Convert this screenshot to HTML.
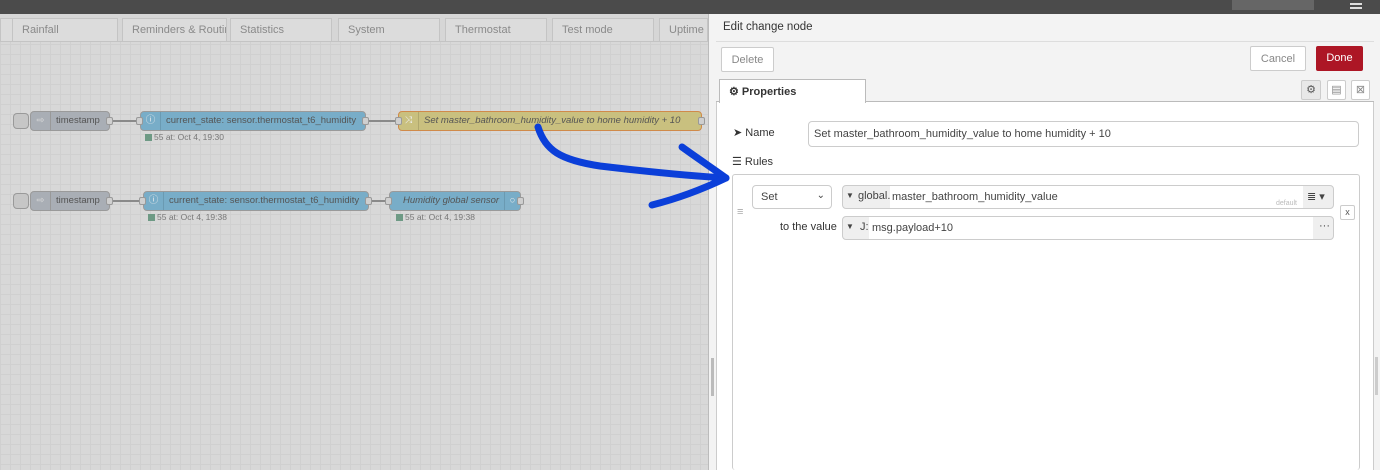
<!DOCTYPE html><html><head><style>
*{box-sizing:border-box;margin:0;padding:0}
body{width:1380px;height:470px;overflow:hidden;position:relative;font-family:"Liberation Sans",sans-serif;font-size:11px;color:#555;background:#d6d6d6}
.a{position:absolute}
#canvas{left:0;top:14px;width:708px;height:456px;background-color:#d8d8d8;background-image:linear-gradient(#d0d0d0 1px,transparent 1px),linear-gradient(90deg,#d0d0d0 1px,transparent 1px);background-size:10px 10px}
.tab{top:18px;height:23px;background:#dcdcdc;border:1px solid #c4c4c4;border-bottom:none;color:#8a8a8a;font-size:11px;padding:5px 9px;white-space:nowrap;overflow:hidden}
.node{height:20px;border:1px solid #9a9a9a;border-radius:4px;font-size:9.5px;line-height:18px;white-space:nowrap;color:#555;overflow:hidden}
.port{width:7px;height:8px;background:#cfcfcf;border:1px solid #999;border-radius:2px}
.wire{height:2px;background:#8a8a8a}
.st{font-size:8.5px;color:#777}
.st i{display:inline-block;width:7px;height:7px;background:#6e9a85;margin-right:2px;vertical-align:-1px}
.btn{border:1px solid #ccc;background:#fff;border-radius:2px;color:#888;font-size:11px;text-align:center}
.inp{border:1px solid #ccc;border-radius:4px;background:#fff;font-size:11px;color:#444}
</style></head><body>
<div class="a" style="left:0;top:0;width:1380px;height:14px;background:#4b4b4b"></div>
<div class="a" style="left:1232px;top:0;width:82px;height:10px;background:#666"></div>
<div class="a" style="left:1350px;top:3px;width:12px;height:2px;background:#ddd"></div>
<div class="a" style="left:1350px;top:7px;width:12px;height:2px;background:#ddd"></div>
<div id="canvas" class="a"></div>
<div class="a" style="left:0;top:14px;width:708px;height:28px;background:#d6d6d6;border-bottom:1px solid #c4c4c4"></div>
<div class="a tab" style="left:0;width:8px"></div>
<div class="a tab" style="left:12px;width:106px">Rainfall</div>
<div class="a tab" style="left:122px;width:105px">Reminders &amp; Routin</div>
<div class="a tab" style="left:230px;width:102px">Statistics</div>
<div class="a tab" style="left:338px;width:102px">System</div>
<div class="a tab" style="left:445px;width:102px">Thermostat</div>
<div class="a tab" style="left:552px;width:102px">Test mode</div>
<div class="a tab" style="left:659px;width:49px">Uptime</div>

<div class="a" style="left:13px;top:113px;width:16px;height:16px;border:1px solid #999;border-radius:4px;background:#c6c6c6"></div>
<div class="a node" style="left:30px;top:111px;width:80px;background:#a9aeb5"><span style="display:inline-block;width:20px;border-right:1px solid #999;text-align:center;color:#ddd">⇨</span><span style="padding-left:5px">timestamp</span></div>
<div class="a port" style="left:106px;top:117px"></div>
<div class="a wire" style="left:113px;top:120px;width:28px"></div>
<div class="a node" style="left:140px;top:111px;width:226px;background:#78adc8"><span style="display:inline-block;width:20px;border-right:1px solid #6a9ab2;text-align:center;color:#eee">ⓘ</span><span style="padding-left:5px">current_state: sensor.thermostat_t6_humidity</span></div>
<div class="a port" style="left:136px;top:117px"></div>
<div class="a port" style="left:362px;top:117px"></div>
<div class="a wire" style="left:369px;top:120px;width:30px"></div>
<div class="a st" style="left:145px;top:132px"><i></i>55 at: Oct 4, 19:30</div>
<div class="a node" style="left:398px;top:111px;width:304px;background:#c9c07f;border-color:#d08a4a"><span style="display:inline-block;width:20px;border-right:1px solid #b0a86e;text-align:center;color:#eee">⤨</span><span style="padding-left:5px;font-style:italic">Set master_bathroom_humidity_value to home humidity + 10</span></div>
<div class="a port" style="left:395px;top:117px"></div>
<div class="a port" style="left:698px;top:117px"></div>

<div class="a" style="left:13px;top:193px;width:16px;height:16px;border:1px solid #999;border-radius:4px;background:#c6c6c6"></div>
<div class="a node" style="left:30px;top:191px;width:80px;background:#a9aeb5"><span style="display:inline-block;width:20px;border-right:1px solid #999;text-align:center;color:#ddd">⇨</span><span style="padding-left:5px">timestamp</span></div>
<div class="a port" style="left:106px;top:197px"></div>
<div class="a wire" style="left:113px;top:200px;width:30px"></div>
<div class="a node" style="left:143px;top:191px;width:226px;background:#78adc8"><span style="display:inline-block;width:20px;border-right:1px solid #6a9ab2;text-align:center;color:#eee">ⓘ</span><span style="padding-left:5px">current_state: sensor.thermostat_t6_humidity</span></div>
<div class="a port" style="left:139px;top:197px"></div>
<div class="a port" style="left:365px;top:197px"></div>
<div class="a wire" style="left:372px;top:200px;width:18px"></div>
<div class="a st" style="left:148px;top:212px"><i></i>55 at: Oct 4, 19:38</div>
<div class="a node" style="left:389px;top:191px;width:132px;background:#78adc8"><span style="padding-left:13px;font-style:italic">Humidity global sensor</span><span style="position:absolute;right:0;top:0;width:16px;height:18px;border-left:1px solid #6a9ab2;text-align:center;color:#eee;background:#78adc8">○</span></div>
<div class="a port" style="left:385px;top:197px"></div>
<div class="a port" style="left:517px;top:197px"></div>
<div class="a st" style="left:396px;top:212px"><i></i>55 at: Oct 4, 19:38</div>

<div class="a" style="left:708px;top:14px;width:672px;height:456px;background:#f3f3f3;border-left:1px solid #bbb"></div>
<div class="a" style="left:711px;top:358px;width:3px;height:38px;background:#bbb"></div>
<div class="a" style="left:716px;top:14px;width:658px;height:456px;background:#fff;border-left:1px solid #ccc;border-right:1px solid #ccc"></div>
<div class="a" style="left:1375px;top:357px;width:3px;height:38px;background:#ccc"></div>
<div class="a" style="left:716px;top:14px;width:658px;height:28px;background:#f3f3f3;border-bottom:1px solid #ddd;font-size:11.5px;color:#333;padding:7px 7px">Edit change node</div>
<div class="a" style="left:716px;top:42px;width:658px;height:36px;background:#f3f3f3"></div>
<div class="a btn" style="left:721px;top:47px;width:53px;height:25px;line-height:24px">Delete</div>
<div class="a btn" style="left:1250px;top:46px;width:56px;height:25px;line-height:24px">Cancel</div>
<div class="a" style="left:1316px;top:46px;width:47px;height:25px;background:#ad1625;color:#fff;font-size:11px;text-align:center;line-height:25px;border-radius:2px">Done</div>
<div class="a" style="left:716px;top:78px;width:658px;height:24px;background:#f3f3f3;border-bottom:1px solid #bbb"></div>
<div class="a" style="left:719px;top:79px;width:147px;height:24px;background:#fff;border:1px solid #bbb;border-bottom:none;font-size:11px;color:#333;padding:5px 9px;font-weight:bold">⚙ Properties</div>
<div class="a btn" style="left:1301px;top:80px;width:20px;height:20px;background:#e8e8e8;color:#555;line-height:18px">⚙</div>
<div class="a btn" style="left:1327px;top:80px;width:19px;height:20px;line-height:18px">▤</div>
<div class="a btn" style="left:1351px;top:80px;width:19px;height:20px;line-height:18px">⊠</div>

<div class="a" style="left:733px;top:126px;font-size:11px;color:#333">➤ Name</div>
<div class="a inp" style="left:808px;top:121px;width:551px;height:26px;padding:6px 5px">Set master_bathroom_humidity_value to home humidity + 10</div>
<div class="a" style="left:732px;top:155px;font-size:11px;color:#333">☰ Rules</div>
<div class="a" style="left:732px;top:174px;width:628px;height:296px;border:1px solid #ccc;border-bottom:none;border-radius:3px"></div>
<div class="a" style="left:737px;top:206px;color:#aaa;font-size:11px">≡</div>
<div class="a inp" style="left:752px;top:185px;width:80px;height:24px;padding:5px 8px">Set<span style="position:absolute;right:6px;top:4px;font-size:10px">⌄</span></div>
<div class="a inp" style="left:842px;top:185px;width:492px;height:24px;background:#efefef;overflow:hidden"><span style="position:absolute;left:3px;top:5px;font-size:8px">▼</span><span style="position:absolute;left:15px;top:4px">global.</span><div style="position:absolute;left:47px;top:0;width:413px;height:22px;background:#fff;padding:5px 2px">master_bathroom_humidity_value<span style="position:absolute;right:6px;top:14px;font-size:7px;color:#bbb">default</span></div><span style="position:absolute;left:464px;top:4px">≣ ▾</span></div>
<div class="a" style="left:780px;top:221px;font-size:11px;color:#333">to the value</div>
<div class="a inp" style="left:842px;top:216px;width:492px;height:24px;background:#efefef;overflow:hidden"><span style="position:absolute;left:3px;top:5px;font-size:8px">▼</span><span style="position:absolute;left:17px;top:4px">J:</span><div style="position:absolute;left:26px;top:0;width:444px;height:22px;background:#fff;padding:5px 3px">msg.payload+10</div><span style="position:absolute;left:476px;top:3px">···</span></div>
<div class="a btn" style="left:1340px;top:205px;width:15px;height:15px;font-size:9px;line-height:13px;color:#555">x</div>

<svg class="a" style="left:0;top:0" width="1380" height="470"><path d="M538 127 C545 150 560 160 600 166 C650 172 690 176 726 178" stroke="#0b3fd9" stroke-width="7" fill="none" stroke-linecap="round"/><path d="M682 147 C700 160 715 170 726 178 C705 188 680 198 652 205" stroke="#0b3fd9" stroke-width="7" fill="none" stroke-linecap="round" stroke-linejoin="round"/></svg>
</body></html>
